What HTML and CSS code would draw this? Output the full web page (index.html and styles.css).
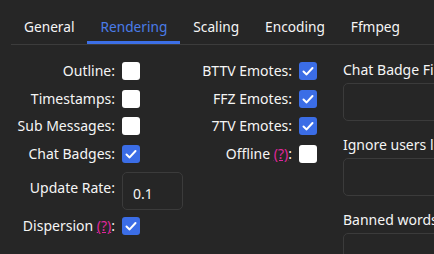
FILE: index.html
```html
<!DOCTYPE html>
<html>
<head>
<meta charset="utf-8">
<link rel="stylesheet" href="styles.css">
</head>
<body>
<div class="tabs">
  <div class="tab">General</div>
  <div class="tab active">Rendering</div>
  <div class="tab">Scaling</div>
  <div class="tab">Encoding</div>
  <div class="tab">Ffmpeg</div>
</div>
<div class="content">
  <div class="col col1">
    <span class="label">Outline:</span><span class="box"></span>
    <span class="label">Timestamps:</span><span class="box"></span>
    <span class="label">Sub Messages:</span><span class="box"></span>
    <span class="label">Chat Badges:</span><span class="box checked"><svg viewBox="0 0 18 18"><polyline points="4.5,9.5 7.6,12.4 13.5,6" /></svg></span>
    <span class="label label-input">Update Rate:</span><span class="input">0.1</span>
    <span class="label">Dispersion <span class="help">(?)</span>:</span><span class="box checked"><svg viewBox="0 0 18 18"><polyline points="4.5,9.5 7.6,12.4 13.5,6" /></svg></span>
  </div>
  <div class="col col2">
    <span class="label">BTTV Emotes:</span><span class="box checked"><svg viewBox="0 0 18 18"><polyline points="4.5,9.5 7.6,12.4 13.5,6" /></svg></span>
    <span class="label">FFZ Emotes:</span><span class="box checked"><svg viewBox="0 0 18 18"><polyline points="4.5,9.5 7.6,12.4 13.5,6" /></svg></span>
    <span class="label">7TV Emotes:</span><span class="box checked"><svg viewBox="0 0 18 18"><polyline points="4.5,9.5 7.6,12.4 13.5,6" /></svg></span>
    <span class="label">Offline <span class="help">(?)</span>:</span><span class="box"></span>
  </div>
  <div class="col col3">
    <div class="field-label">Chat Badge Filter</div>
    <div class="textbox"></div>
    <div class="field-label">Ignore users list</div>
    <div class="textbox"></div>
    <div class="field-label">Banned words list</div>
    <div class="textbox"></div>
  </div>
</div>
</body>
</html>
```

FILE: styles.css
```css
html, body {
  margin: 0;
  padding: 0;
  background: #262626;
  width: 434px;
  height: 254px;
  overflow: hidden;
}
body {
  font-family: "Noto Sans", "Open Sans", sans-serif;
  font-size: 14px;
  line-height: 20px;
  color: #f5f5f5;
}
.tabs {
  display: flex;
  margin-left: 11px;
  padding-top: 17px;
  border-bottom: 1px solid #3c3c3c;
}
.tab {
  padding: 0 13px 4px;
  border-bottom: 3px solid transparent;
  font-size: 13.7px;
  white-space: nowrap;
}
.tab.active {
  color: #4a7ce8;
  border-bottom-color: #3c6fe6;
}
.content {
  display: flex;
  padding-top: 16px;
  padding-left: 11px;
}
.col {
  display: grid;
  column-gap: 7px;
  row-gap: 7.7px;
  align-items: center;
  align-content: start;
}
.col1 {
  grid-template-columns: 104px 61px;
}
.col2 {
  grid-template-columns: 109px 18px;
}
.label {
  text-align: right;
  white-space: nowrap;
  height: 20px;
}
.label-input {
  margin-top: -5px;
}
.help {
  color: #e0269c;
  text-decoration: underline;
}
.box {
  width: 18px;
  height: 18px;
  box-sizing: border-box;
  border-radius: 3px;
  background: #ffffff;
  display: flex;
}
.box.checked {
  background: #3b6de6;
}
.box svg {
  width: 18px;
  height: 18px;
  fill: none;
  stroke: #ffffff;
  stroke-width: 2;
  stroke-linecap: round;
  stroke-linejoin: round;
}
.input {
  height: 38px;
  margin: 0 0 -1px;
  box-sizing: border-box;
  border: 1px solid #3b3b3b;
  border-radius: 5px;
  padding: 11px 0 0 10px;
}
.col3 {
  display: block;
  margin-left: 26px;
  margin-top: -1px;
  width: 200px;
}
.field-label {
  white-space: nowrap;
  height: 20px;
  margin-bottom: 3px;
}
.textbox {
  height: 38px;
  box-sizing: border-box;
  border: 1px solid #3b3b3b;
  border-radius: 5px;
  margin-bottom: 14px;
}
```
